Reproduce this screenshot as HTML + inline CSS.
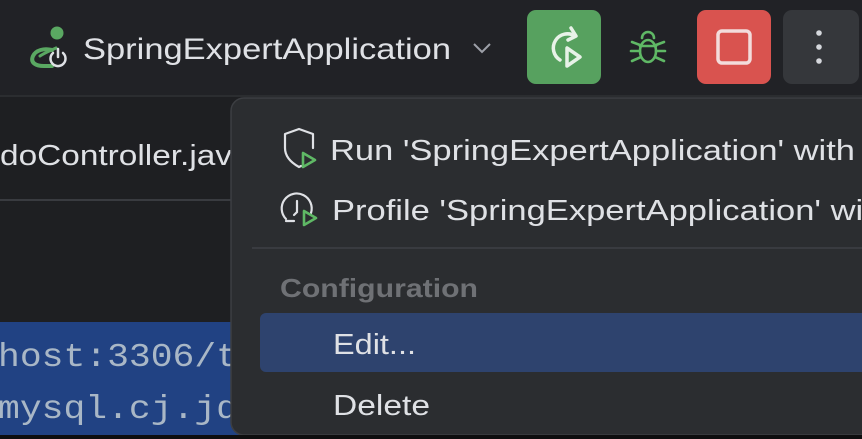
<!DOCTYPE html>
<html><head><meta charset="utf-8"><style>
html,body{margin:0;padding:0;background:#1e1f22;overflow:hidden}
svg{display:block}
text{font-family:"Liberation Sans",sans-serif}
</style></head><body>
<svg width="862" height="439" viewBox="0 0 862 439" xmlns="http://www.w3.org/2000/svg">
<rect x="0" y="0" width="862" height="96" fill="#212226"/>
<rect x="0" y="95" width="862" height="2" fill="#2b2d30"/>
<rect x="0" y="97" width="862" height="342" fill="#1e1f22"/>
<rect x="0" y="199" width="240" height="2" fill="#393b40"/>
<rect x="0" y="322" width="240" height="113" fill="#214283"/>
<text x="0" y="165" font-size="29" fill="#dfe1e5" textLength="232" lengthAdjust="spacingAndGlyphs">doController.jav</text>
<text x="-2" y="366" font-size="33" fill="#a9b7c6" textLength="240" lengthAdjust="spacingAndGlyphs" style="font-family:'Liberation Mono',monospace">host:3306/t</text>
<text x="-2" y="418" font-size="33" fill="#a9b7c6" textLength="240" lengthAdjust="spacingAndGlyphs" style="font-family:'Liberation Mono',monospace">mysql.cj.jd</text>
<rect x="0" y="435" width="862" height="4" fill="#0e0e0f"/>

<!-- spring icon -->
<path d="M52 50 C44 48 36 50 33 56 C30 63 36 66 44 66 L52 66" stroke="#5aa862" stroke-width="4" fill="none" stroke-linecap="round"/>
<path d="M40 56 C46 52 52 50 56 48" stroke="#5aa862" stroke-width="3" fill="none" stroke-linecap="round"/>
<circle cx="57" cy="33" r="6.5" fill="#5aa862"/>
<path d="M53 53 A7.5 7.5 0 1 0 63 53" stroke="#dfe1e5" stroke-width="2.5" fill="none" stroke-linecap="round"/>
<line x1="58" y1="49" x2="58" y2="57" stroke="#dfe1e5" stroke-width="2.5" stroke-linecap="round"/>
<text x="83" y="59" font-size="30" fill="#dfe1e5" textLength="368" lengthAdjust="spacingAndGlyphs">SpringExpertApplication</text>
<path d="M474 44 L482 52 L490 44" stroke="#9da0a8" stroke-width="2" fill="none"/>

<!-- green rerun -->
<rect x="527" y="10" width="74" height="74" rx="9" fill="#57a15f"/>
<path d="M560 60 A14 14 0 1 1 575 36" stroke="#e8f2e8" stroke-width="3.5" fill="none" stroke-linecap="round"/>
<path d="M571 28 L576 36 L568 40" stroke="#e8f2e8" stroke-width="3.5" fill="none" stroke-linecap="round" stroke-linejoin="round"/>
<path d="M567 48 L567 66 L580 57 Z" stroke="#e8f2e8" stroke-width="3.5" fill="none" stroke-linejoin="round"/>

<!-- bug -->
<g stroke="#5fb865" stroke-width="2.6" fill="none" stroke-linecap="round">
<ellipse cx="648" cy="51" rx="8" ry="11"/>
<path d="M642 38 A6 6 0 0 1 654 38"/>
<line x1="640" y1="46" x2="656" y2="46"/>
<line x1="632" y1="42" x2="640" y2="45"/><line x1="664" y1="42" x2="656" y2="45"/>
<line x1="631" y1="51" x2="640" y2="51"/><line x1="665" y1="51" x2="656" y2="51"/>
<line x1="632" y1="61" x2="641" y2="57"/><line x1="664" y1="61" x2="655" y2="57"/>
</g>

<!-- red stop -->
<rect x="697" y="10" width="74" height="74" rx="9" fill="#d9534f"/>
<rect x="718" y="31" width="32" height="32" rx="4" stroke="#f3dcdc" stroke-width="3.5" fill="none"/>

<!-- more -->
<rect x="783" y="10" width="76" height="74" rx="9" fill="#35373b"/>
<circle cx="819" cy="33" r="2.8" fill="#d5d7dc"/>
<circle cx="819" cy="47" r="2.8" fill="#d5d7dc"/>
<circle cx="819" cy="61" r="2.8" fill="#d5d7dc"/>

<!-- popup -->
<rect x="231" y="98" width="660" height="337" rx="13" fill="#2b2d30" stroke="#3c3e42" stroke-width="1.5"/>
<path d="M313 148 L313 134 L299 129 L285 134 L285 148 C285 156 290 162 299 167 L301 166" stroke="#dfe1e5" stroke-width="2.2" fill="none" stroke-linejoin="round" stroke-linecap="round"/>
<path d="M303 153 L303 167 L315 160 Z" stroke="#5fb865" stroke-width="2.6" fill="none" stroke-linejoin="round"/>
<text x="330" y="160" font-size="29" fill="#dfe1e5" textLength="525" lengthAdjust="spacingAndGlyphs">Run 'SpringExpertApplication' with</text>
<path d="M286 219 A15 15 0 1 1 311 213" stroke="#dfe1e5" stroke-width="2.2" fill="none" stroke-linecap="round"/>
<path d="M286 221 L294 221" stroke="#dfe1e5" stroke-width="2.2" fill="none" stroke-linecap="round"/>
<path d="M297 201 L297 212 L294 215" stroke="#dfe1e5" stroke-width="2.2" fill="none" stroke-linecap="round"/>
<path d="M304 211 L304 225 L316 218 Z" stroke="#5fb865" stroke-width="2.6" fill="none" stroke-linejoin="round"/>
<text x="332" y="220" font-size="29" fill="#dfe1e5" textLength="560" lengthAdjust="spacingAndGlyphs">Profile 'SpringExpertApplication' with</text>
<rect x="252" y="247" width="610" height="2" fill="#393b40"/>
<text x="280" y="297" font-size="26" font-weight="bold" fill="#6f7175" textLength="198" lengthAdjust="spacingAndGlyphs">Configuration</text>
<rect x="260" y="313" width="620" height="59" rx="6" fill="#2e436e"/>
<text x="333" y="354" font-size="29" fill="#dfe1e5" textLength="83" lengthAdjust="spacingAndGlyphs">Edit...</text>
<text x="333" y="415" font-size="29" fill="#dfe1e5" textLength="97" lengthAdjust="spacingAndGlyphs">Delete</text>
<rect x="231" y="435" width="631" height="4" fill="#0e0e0f"/>
</svg>
</body></html>
